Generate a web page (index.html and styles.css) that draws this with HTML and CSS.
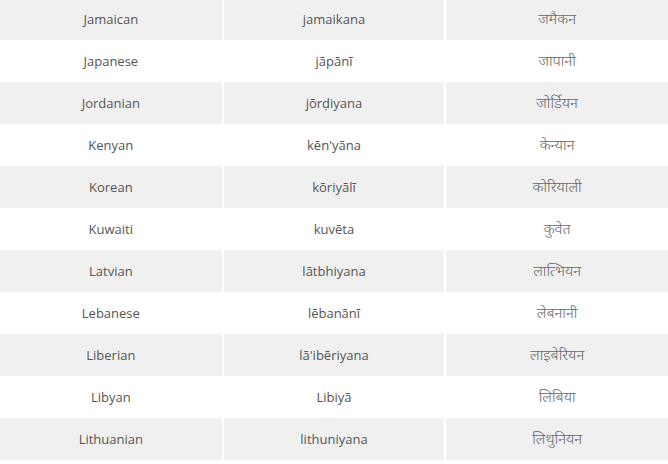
FILE: index.html
```html
<!DOCTYPE html>
<html lang="en">
<head>
<meta charset="utf-8">
<link rel="stylesheet" href="styles.css">
</head>
<body>
<table class="words">
<tbody>
<tr class="alt"><td>Jamaican</td><td>jamaikana</td><td class="hi">जमैकन</td></tr>
<tr><td>Japanese</td><td>jāpānī</td><td class="hi">जापानी</td></tr>
<tr class="alt"><td>Jordanian</td><td>jōrḍiyana</td><td class="hi">जोर्डियन</td></tr>
<tr><td>Kenyan</td><td>kēn'yāna</td><td class="hi">केन्यान</td></tr>
<tr class="alt"><td>Korean</td><td>kōriyālī</td><td class="hi">कोरियाली</td></tr>
<tr><td>Kuwaiti</td><td>kuvēta</td><td class="hi">कुवेत</td></tr>
<tr class="alt"><td>Latvian</td><td>lātbhiyana</td><td class="hi">लात्भियन</td></tr>
<tr><td>Lebanese</td><td>lēbanānī</td><td class="hi">लेबनानी</td></tr>
<tr class="alt"><td>Liberian</td><td>lā'ibēriyana</td><td class="hi">लाइबेरियन</td></tr>
<tr><td>Libyan</td><td>Libiyā</td><td class="hi">लिबिया</td></tr>
<tr class="alt"><td>Lithuanian</td><td>lithuniyana</td><td class="hi">लिथुनियन</td></tr>
</tbody>
</table>
</body>
</html>
```
FILE: styles.css
```css
html, body {
  margin: 0;
  padding: 0;
  background: #ffffff;
}
body {
  font-family: "Open Sans", "Noto Sans", sans-serif;
  font-size: 13px;
  color: #555555;
  overflow: hidden;
}
.words {
  width: 668px;
  border-collapse: collapse;
  table-layout: fixed;
  margin-top: -2px;
}
.words td {
  height: 42px;
  padding: 0;
  text-align: center;
  vertical-align: middle;
  border-left: 2px solid #ffffff;
  box-sizing: border-box;
}
.words td:first-child {
  border-left: 0;
}
.words tr.alt td {
  background: #f0f0f0;
}
.words td.hi {
  font-family: "Noto Sans Devanagari", "Noto Sans", sans-serif;
  font-size: 15px;
  font-weight: 300;
  color: #666666;
  padding-top: 2px;
}
```
